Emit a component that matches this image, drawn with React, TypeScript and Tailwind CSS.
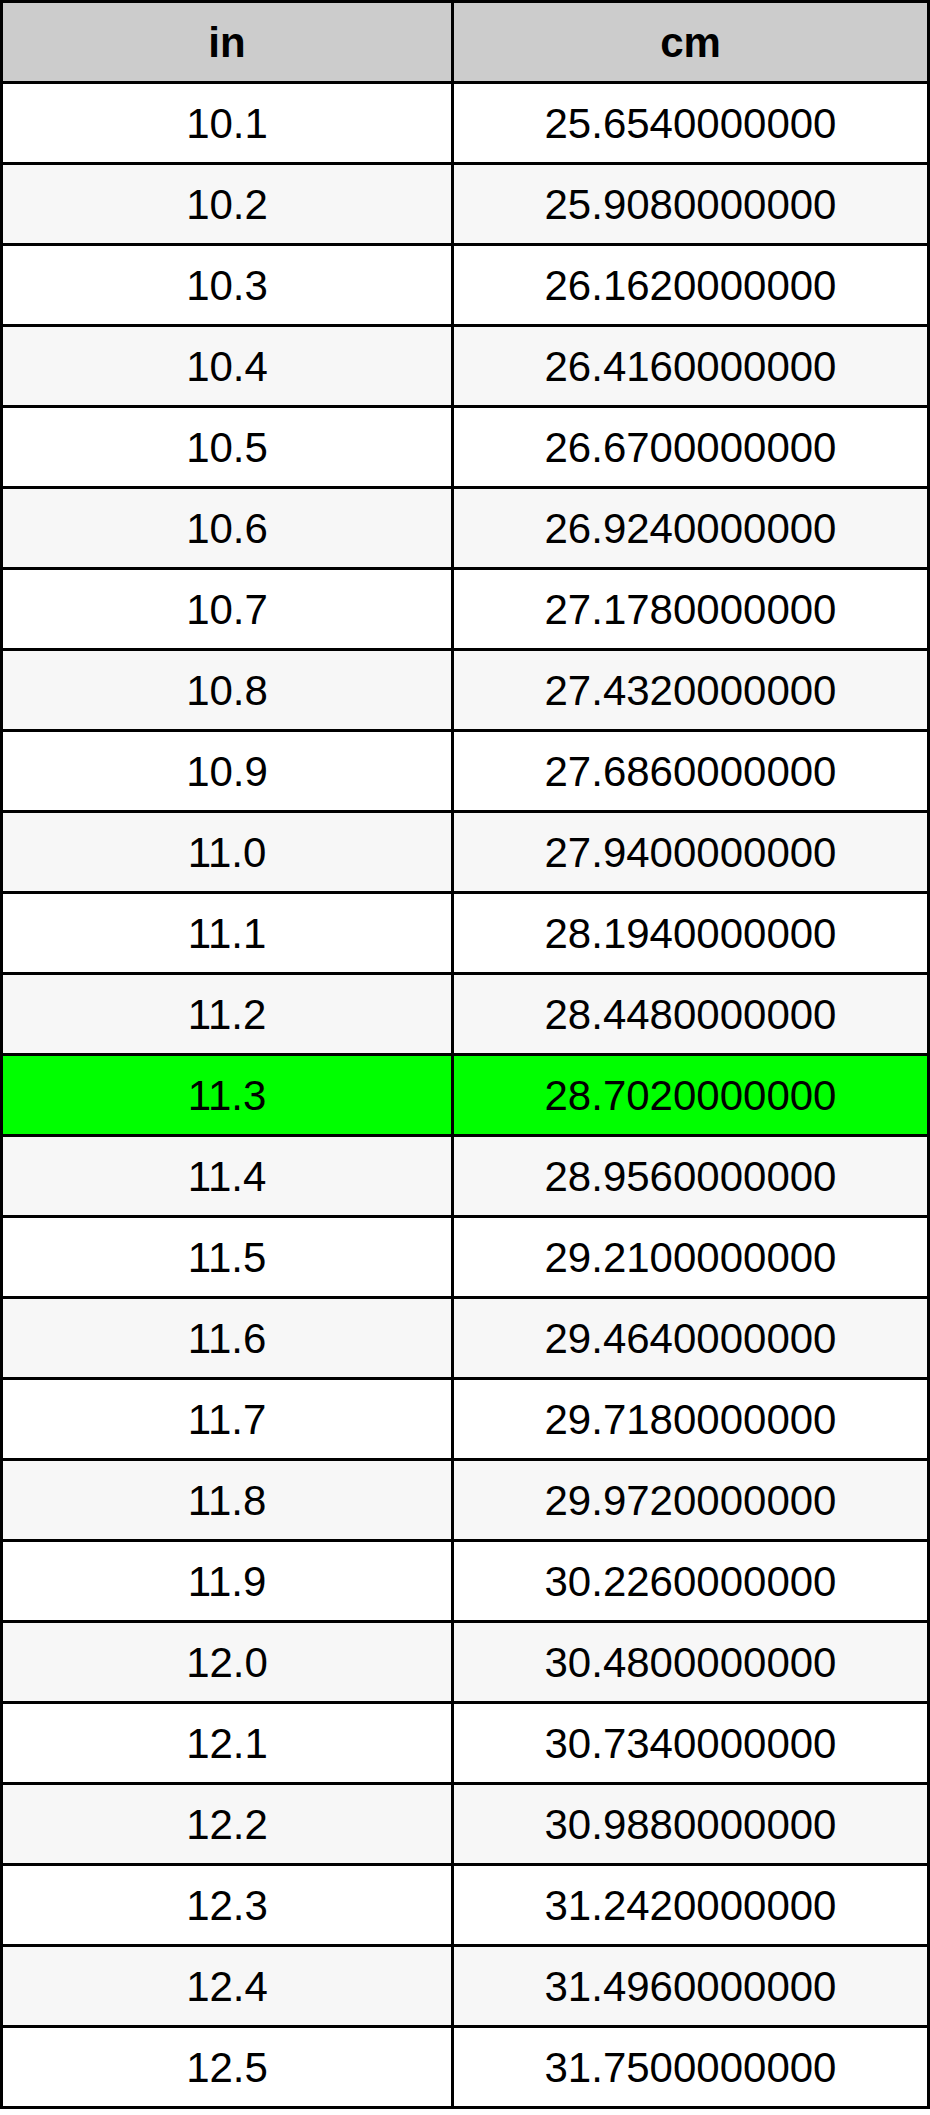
import React from 'react';

// inch -> cm rows, 11.3 is the highlighted value
const rows: [string, string][] = [
  ["10.1", "25.6540000000"],
  ["10.2", "25.9080000000"],
  ["10.3", "26.1620000000"],
  ["10.4", "26.4160000000"],
  ["10.5", "26.6700000000"],
  ["10.6", "26.9240000000"],
  ["10.7", "27.1780000000"],
  ["10.8", "27.4320000000"],
  ["10.9", "27.6860000000"],
  ["11.0", "27.9400000000"],
  ["11.1", "28.1940000000"],
  ["11.2", "28.4480000000"],
  ["11.3", "28.7020000000"],
  ["11.4", "28.9560000000"],
  ["11.5", "29.2100000000"],
  ["11.6", "29.4640000000"],
  ["11.7", "29.7180000000"],
  ["11.8", "29.9720000000"],
  ["11.9", "30.2260000000"],
  ["12.0", "30.4800000000"],
  ["12.1", "30.7340000000"],
  ["12.2", "30.9880000000"],
  ["12.3", "31.2420000000"],
  ["12.4", "31.4960000000"],
  ["12.5", "31.7500000000"],
];

const App = () => {
  return (
    <div className="w-[930px] bg-white font-['Liberation_Sans',Arial,sans-serif] text-black">
      <div className="grid grid-cols-[448px_473px] gap-[3px] bg-black border-[3px] border-black auto-rows-[78px]">
        <div className="bg-[#cccccc] flex items-center justify-center text-[42px] font-bold">in</div>
        <div className="bg-[#cccccc] flex items-center justify-center text-[42px] font-bold">cm</div>
        {rows.map(([inch, cm], i) => {
          const bg = inch === "11.3" ? "bg-[#00ff00]" : i % 2 === 0 ? "bg-white" : "bg-[#f7f7f7]";
          return (
            <React.Fragment key={inch}>
              <div className={`${bg} flex items-center justify-center text-[42px]`}>{inch}</div>
              <div className={`${bg} flex items-center justify-center text-[42px]`}>{cm}</div>
            </React.Fragment>
          );
        })}
      </div>
    </div>
  );
};

export default App;
